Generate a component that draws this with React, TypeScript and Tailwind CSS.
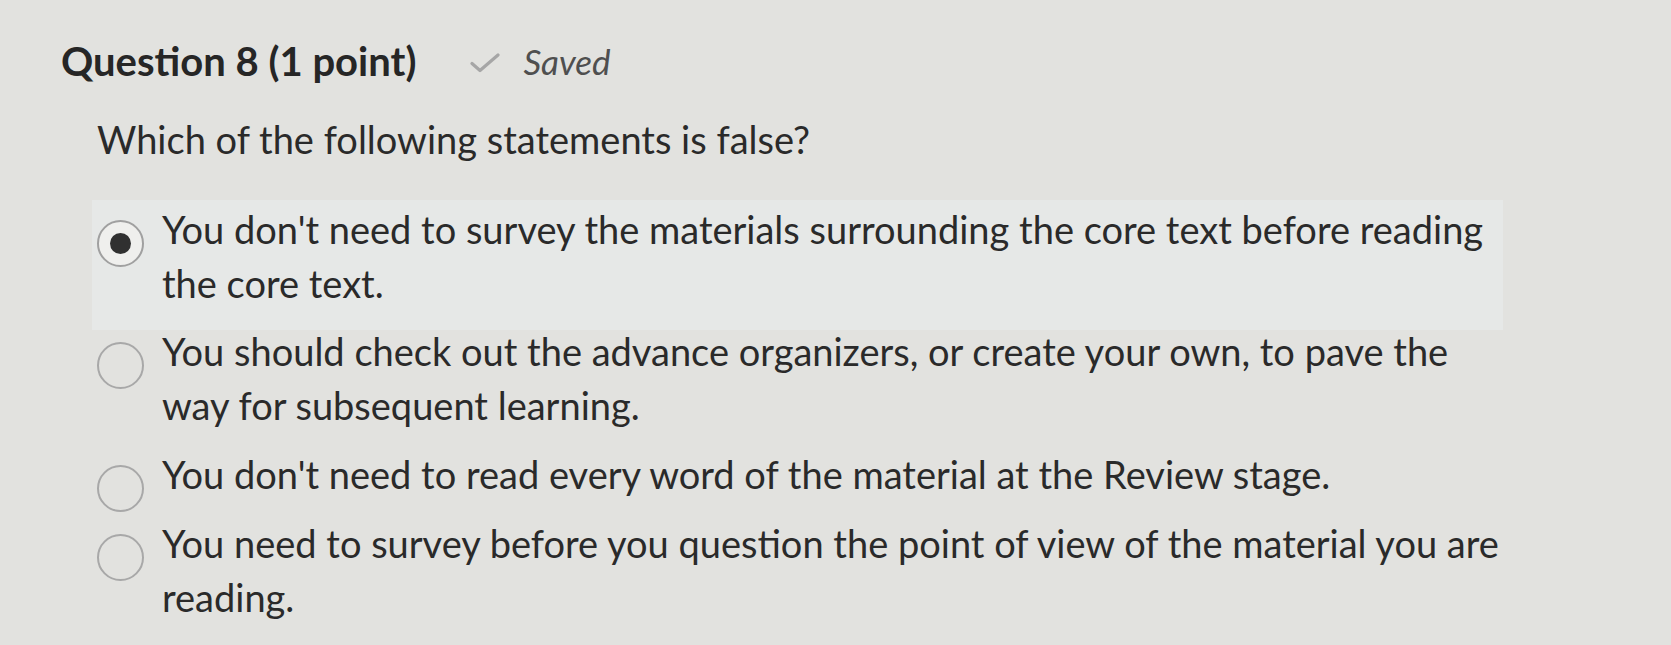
const options = [
  {
    id: 'a',
    text: "You don't need to survey the materials surrounding the core text before reading the core text.",
  },
  {
    id: 'b',
    text: 'You should check out the advance organizers, or create your own, to pave the way for subsequent learning.',
  },
  {
    id: 'c',
    text: "You don't need to read every word of the material at the Review stage.",
  },
  {
    id: 'd',
    text: 'You need to survey before you question the point of view of the material you are reading.',
  },
]

export default function App() {
  const selected = 'a'

  return (
    <div
      className="h-[645px] w-full overflow-hidden bg-[#e2e2df] text-[#2a2a2a]"
      style={{ fontFamily: 'Lato, "Open Sans", sans-serif' }}
    >
      <div className="pl-[61px] pt-[37px]">
        <div className="flex items-end">
          <h1 className="text-[40px] font-bold leading-[48px] text-[#262626]">Question 8 (1 point)</h1>
          <svg viewBox="0 0 30 20" className="mb-[12px] ml-[54px] h-[20px] w-[30px]" fill="none">
            <path d="M2 10.5 L10 17.5 L28 2" stroke="#a6a6a6" strokeWidth="3.2" strokeLinecap="round" strokeLinejoin="round" />
          </svg>
          <span className="ml-[23px] text-[35px] italic leading-[48px] text-[#4f4f4f]">Saved</span>
        </div>

        <p className="ml-[36px] mt-[27px] text-[38px] leading-[54px]">Which of the following statements is false?</p>

        <div className="ml-[31px] mt-[34px] flex w-[1411px] flex-col gap-[15px]">
          {options.map((o) => (
            <Option key={o.id} text={o.text} checked={o.id === selected} />
          ))}
        </div>
      </div>
    </div>
  )
}

function Option({ text, checked }: { text: string; checked: boolean }) {
  return (
    <div className={`flex items-start gap-[18px] pl-[5px] ${checked ? '-mb-[21px] bg-[#e6e8e7] pb-[20px] pt-[2px]' : ''}`}>
      <div className="h-[54px] shrink-0 pt-[18px]">
        {checked ? (
          <div className="grid h-[47px] w-[47px] place-items-center rounded-full border-2 border-[#a0a0a0] bg-[#efefed]">
            <div className="h-[21px] w-[21px] rounded-full bg-[#303030]" />
          </div>
        ) : (
          <div className="h-[47px] w-[47px] rounded-full border-2 border-[#a8a8a8]" />
        )}
      </div>
      <p className="text-[38px] leading-[54px]">{text}</p>
    </div>
  )
}
